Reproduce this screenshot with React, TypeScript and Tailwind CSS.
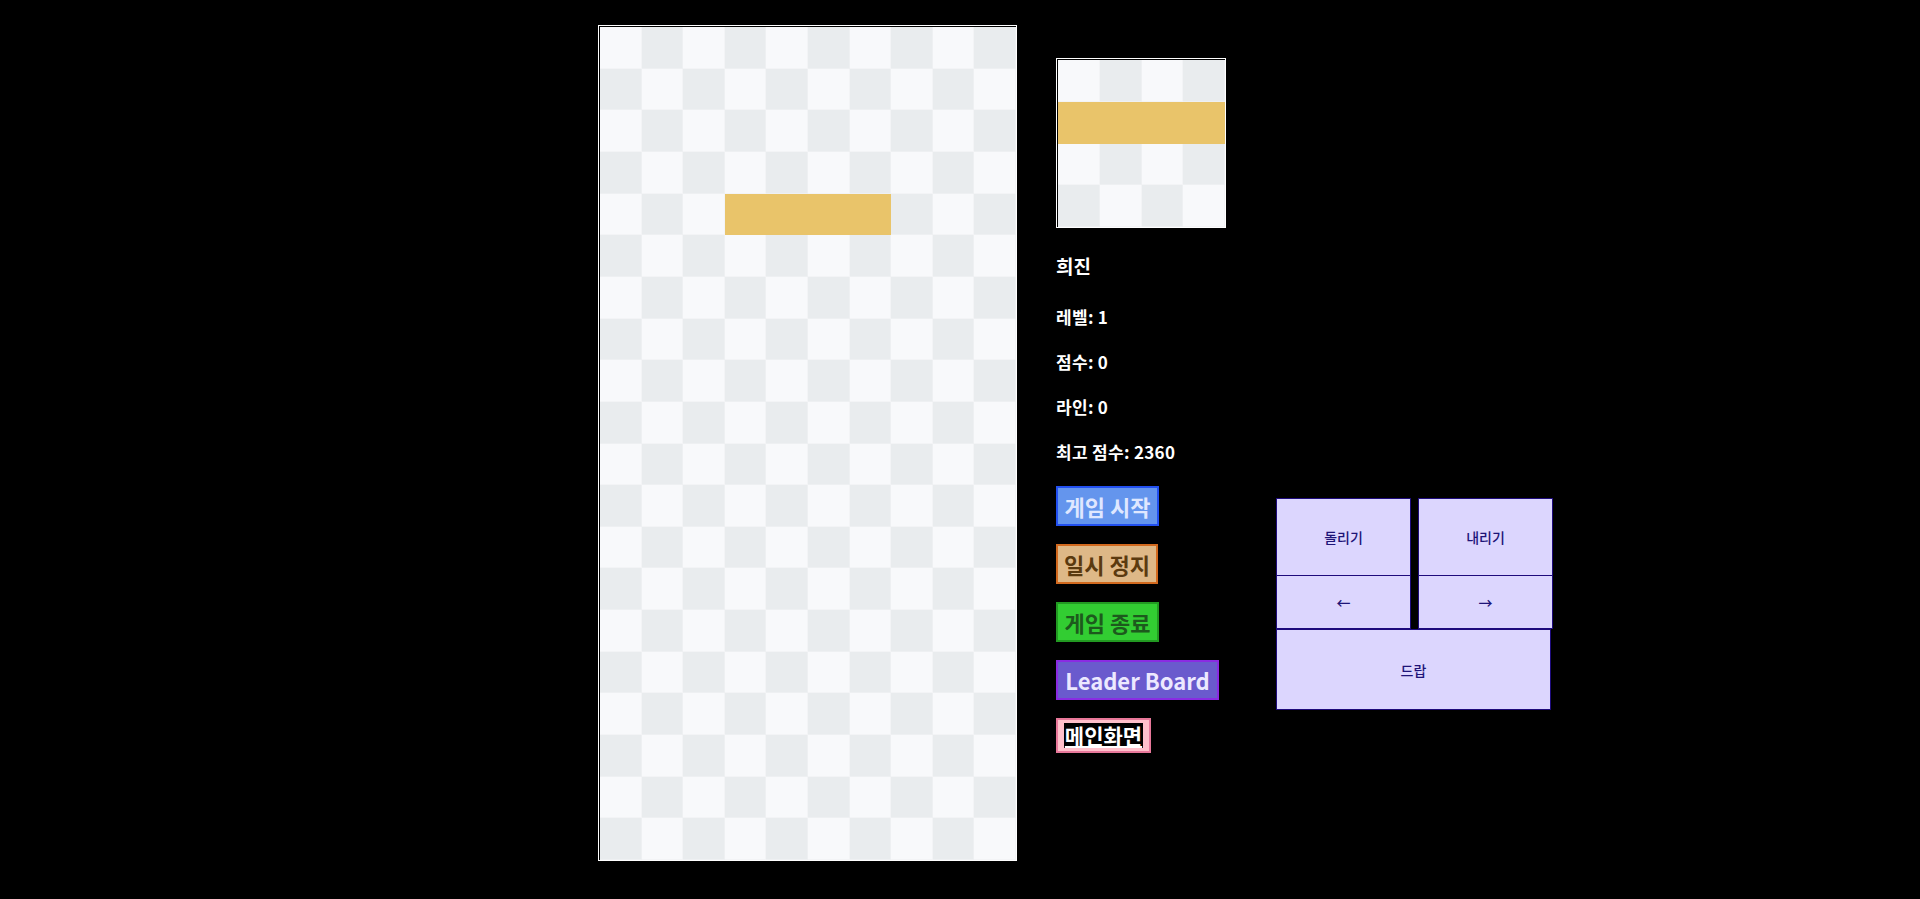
import type { ReactNode } from 'react'

const BOARD_COLS = 10
const BOARD_ROWS = 20
const FONT = { fontFamily: '"Noto Sans CJK KR", "Noto Sans", sans-serif' }

type Cell = { filled: boolean; dark: boolean }

function makeGrid(rows: number, cols: number, filled: (row: number, col: number) => boolean) {
  const cells: Cell[] = []
  for (let row = 0; row < rows; row++) {
    for (let col = 0; col < cols; col++) {
      cells.push({ filled: filled(row, col), dark: (row + col) % 2 === 1 })
    }
  }
  return cells
}

function CellBox({ cell }: { cell: Cell }) {
  if (cell.filled) return <div className="bg-[#e9c46a]" />
  return (
    <div
      className={
        cell.dark
          ? 'border-r border-b border-[#eef0f2] bg-[#e9ecee]'
          : 'border-r border-b border-[#f3f4f6] bg-[#f8f9fb]'
      }
    />
  )
}

function Board() {
  const cells = makeGrid(BOARD_ROWS, BOARD_COLS, (row, col) => row === 4 && col >= 3 && col <= 6)
  return (
    <div className="shrink-0 border border-white bg-black pt-px pl-px">
      <div className="grid h-[833px] w-[416px] grid-cols-10 grid-rows-[repeat(20,minmax(0,1fr))]">
        {cells.map((cell, index) => (
          <CellBox key={index} cell={cell} />
        ))}
      </div>
    </div>
  )
}

function NextPreview() {
  const cells = makeGrid(4, 4, (row) => row === 1)
  return (
    <div className="w-fit border border-white bg-black pt-px pl-px">
      <div className="grid h-[167px] w-[167px] grid-cols-4 grid-rows-4">
        {cells.map((cell, index) => (
          <CellBox key={index} cell={cell} />
        ))}
      </div>
    </div>
  )
}

function ActionButton({ className, children }: { className: string; children: ReactNode }) {
  return (
    <button
      type="button"
      className={`flex h-10 items-center justify-center border-2 text-[22px] font-bold leading-none ${className}`}
    >
      {children}
    </button>
  )
}

function Controls() {
  const key =
    'flex items-center justify-center border-[#1e0b7c] bg-[#dcd6fe] text-sm font-medium text-[#1e1478]'
  return (
    <div className="mt-[473px] ml-[49px] flex flex-col" style={FONT}>
      <div className="flex gap-[7px]">
        <div className="flex w-[135px] flex-col">
          <button type="button" className={`h-[78px] border ${key}`}>
            돌리기
          </button>
          <button type="button" className={`h-[53px] border-x border-b ${key}`}>
            ←
          </button>
        </div>
        <div className="flex w-[135px] flex-col">
          <button type="button" className={`h-[78px] border ${key}`}>
            내리기
          </button>
          <button type="button" className={`h-[53px] border-x border-b ${key}`}>
            →
          </button>
        </div>
      </div>
      <button type="button" className={`h-[81px] w-[275px] border ${key}`}>
        드랍
      </button>
    </div>
  )
}

export default function App() {
  return (
    <div className="flex min-h-screen items-start bg-black pt-[25px] pl-[598px] text-white" style={FONT}>
      <Board />

      <div className="mt-[33px] ml-[39px] flex w-[171px] shrink-0 flex-col">
        <NextPreview />

        <h3 className="mt-[26px] text-[19px] font-bold leading-6">희진</h3>
        <div className="mt-[27px] flex flex-col gap-[21px] text-[17px] font-bold leading-6 tracking-[0.3px]">
          <p>레벨: 1</p>
          <p>점수: 0</p>
          <p>라인: 0</p>
          <p>최고 점수: 2360</p>
        </div>

        <div className="mt-[22px] flex flex-col items-start gap-[18px]">
          <ActionButton className="w-[103px] border-[#2250f0] bg-[#6495ed] text-[#dfe7ff]">
            게임 시작
          </ActionButton>
          <ActionButton className="w-[102px] border-[#d2691e] bg-[#deb887] text-[#5b3a0f]">
            일시 정지
          </ActionButton>
          <ActionButton className="w-[103px] border-[#229a22] bg-[#32cd32] text-[#1d5a1d]">
            게임 종료
          </ActionButton>
          <ActionButton className="w-[163px] border-[#8a2be2] bg-[#6a5acd] text-[#ece8ff]">
            Leader Board
          </ActionButton>
          <button
            type="button"
            className="flex h-[35px] w-[95px] items-center justify-center border-2 border-[#e8789a] bg-[#ffc0cb]"
          >
            <span className="bg-black px-px text-[21px] font-bold leading-[25px] text-white underline underline-offset-2">
              메인화면
            </span>
          </button>
        </div>
      </div>

      <Controls />
    </div>
  )
}
